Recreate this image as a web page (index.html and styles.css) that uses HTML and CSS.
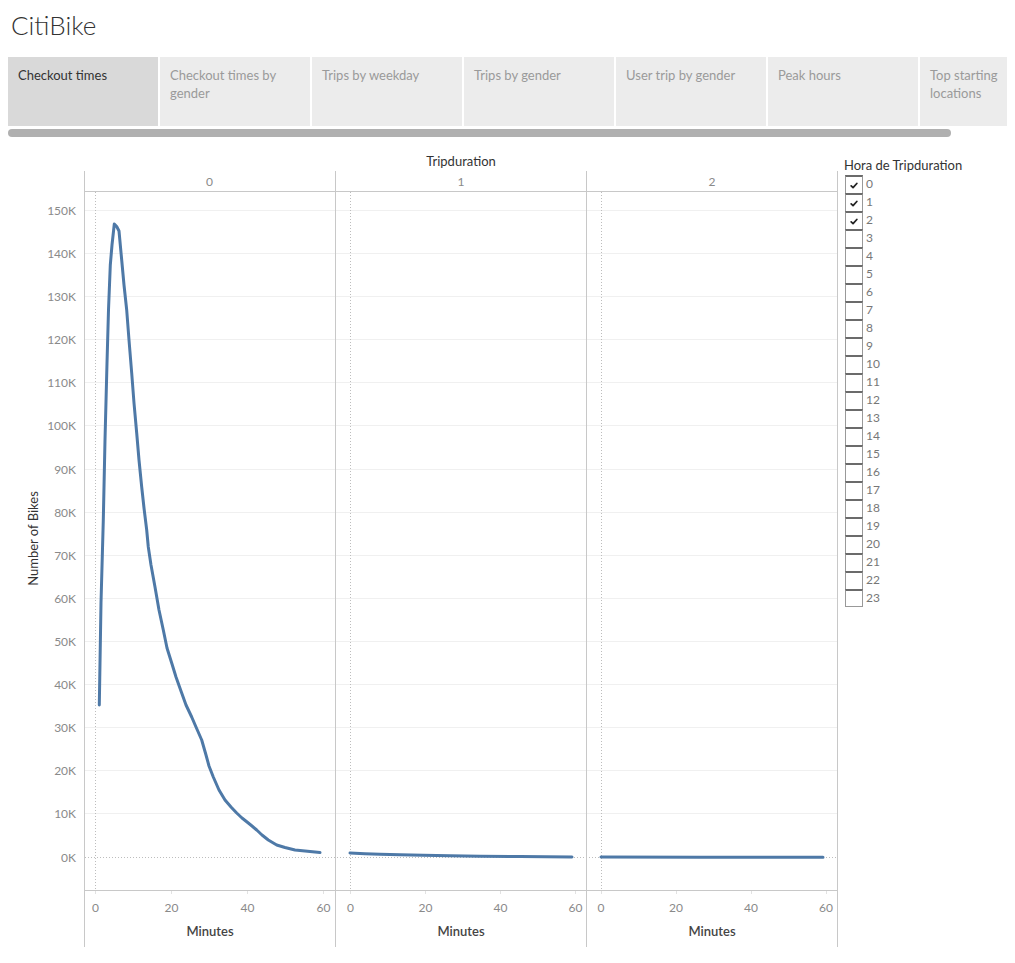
FILE: index.html
```html
<!DOCTYPE html>
<html lang="en">
<head>
<meta charset="utf-8">
<title>CitiBike</title>
<link rel="stylesheet" href="styles.css">
</head>
<body>
<h1 class="title">CitiBike</h1>
<nav class="tabs">
  <div class="tab active">Checkout times</div>
  <div class="tab">Checkout times by gender</div>
  <div class="tab">Trips by weekday</div>
  <div class="tab">Trips by gender</div>
  <div class="tab">User trip by gender</div>
  <div class="tab">Peak hours</div>
  <div class="tab last">Top starting locations</div>
</nav>
<div class="scrollbar"></div>
<main class="viz">
  <svg class="chart" width="838" height="800" viewBox="0 150 838 800" xmlns="http://www.w3.org/2000/svg">
    <!-- gridlines -->
    <g class="grid">
      <line x1="85" x2="837" y1="210.5" y2="210.5"/>
      <line x1="85" x2="837" y1="253.5" y2="253.5"/>
      <line x1="85" x2="837" y1="296.5" y2="296.5"/>
      <line x1="85" x2="837" y1="339.5" y2="339.5"/>
      <line x1="85" x2="837" y1="382.5" y2="382.5"/>
      <line x1="85" x2="837" y1="425.5" y2="425.5"/>
      <line x1="85" x2="837" y1="469.5" y2="469.5"/>
      <line x1="85" x2="837" y1="512.5" y2="512.5"/>
      <line x1="85" x2="837" y1="555.5" y2="555.5"/>
      <line x1="85" x2="837" y1="598.5" y2="598.5"/>
      <line x1="85" x2="837" y1="641.5" y2="641.5"/>
      <line x1="85" x2="837" y1="684.5" y2="684.5"/>
      <line x1="85" x2="837" y1="727.5" y2="727.5"/>
      <line x1="85" x2="837" y1="770.5" y2="770.5"/>
      <line x1="85" x2="837" y1="813.5" y2="813.5"/>
    </g>
    <!-- zero lines -->
    <g class="zero">
      <line x1="85" x2="837" y1="857.5" y2="857.5"/>
      <line x1="95.5" x2="95.5" y1="192" y2="890"/>
      <line x1="350.5" x2="350.5" y1="192" y2="890"/>
      <line x1="601.5" x2="601.5" y1="192" y2="890"/>
    </g>
    <!-- bottom ticks -->
    <g class="ticks">
      <line x1="95.5" x2="95.5" y1="891" y2="894"/>
      <line x1="171.5" x2="171.5" y1="891" y2="894"/>
      <line x1="247.5" x2="247.5" y1="891" y2="894"/>
      <line x1="323.5" x2="323.5" y1="891" y2="894"/>
      <line x1="350.5" x2="350.5" y1="891" y2="894"/>
      <line x1="425.5" x2="425.5" y1="891" y2="894"/>
      <line x1="500.5" x2="500.5" y1="891" y2="894"/>
      <line x1="575.5" x2="575.5" y1="891" y2="894"/>
      <line x1="601.5" x2="601.5" y1="891" y2="894"/>
      <line x1="676.5" x2="676.5" y1="891" y2="894"/>
      <line x1="751.5" x2="751.5" y1="891" y2="894"/>
      <line x1="826.5" x2="826.5" y1="891" y2="894"/>
    </g>
    <!-- frame -->
    <g class="frame">
      <line x1="84.5" x2="84.5" y1="171" y2="947"/>
      <line x1="335.5" x2="335.5" y1="171" y2="947"/>
      <line x1="586.5" x2="586.5" y1="171" y2="947"/>
      <line x1="837.5" x2="837.5" y1="171" y2="947"/>
      <line x1="84" x2="838" y1="191.5" y2="191.5"/>
      <line x1="84" x2="838" y1="890.5" y2="890.5"/>
    </g>
    <!-- data -->
    <g class="series">
      <polyline points="99.3,705 101,603 103.3,520 105,440 107,363 108.5,310 110.3,265 112,245 114.3,224 116.7,226.5 119,231 121.7,260 124,285 126.7,310 129,340 131.7,373 134,403 136.7,433 139,460 141.7,487 144,508 146.7,530 148.3,547 151,565 155,587 159,610 163.3,630 167,648 171.7,663 176,677 181.7,693 186,705 191.7,717 196,727 201.7,740 206,755 209,766 213.3,777 219,790 225,800 231,807 236.7,813 242,818 248.3,823 252,826 256.7,830 262,835 268.3,840 276.7,845 285,847.5 295,850 305,851 320,852.5"/>
      <polyline points="350,853 365,853.7 380,854.3 400,854.8 423,855.3 450,855.8 480,856.2 520,856.6 572,857"/>
      <polyline points="601,857 700,857.2 823,857.2"/>
    </g>
    <!-- texts -->
    <text class="axis-title" x="461" y="165.5" text-anchor="middle">Tripduration</text>
    <g class="tick-label" text-anchor="middle">
      <text x="209.5" y="186">0</text>
      <text x="461" y="186">1</text>
      <text x="712" y="186">2</text>
    </g>
    <g class="tick-label" text-anchor="end">
      <text x="76" y="215">150K</text>
      <text x="76" y="258">140K</text>
      <text x="76" y="301">130K</text>
      <text x="76" y="344">120K</text>
      <text x="76" y="387">110K</text>
      <text x="76" y="430">100K</text>
      <text x="76" y="474">90K</text>
      <text x="76" y="517">80K</text>
      <text x="76" y="560">70K</text>
      <text x="76" y="603">60K</text>
      <text x="76" y="646">50K</text>
      <text x="76" y="689">40K</text>
      <text x="76" y="732">30K</text>
      <text x="76" y="775">20K</text>
      <text x="76" y="818">10K</text>
      <text x="76" y="861.5">0K</text>
    </g>
    <text class="axis-title" transform="translate(37.5 538.5) rotate(-90)" text-anchor="middle">Number of Bikes</text>
    <g class="tick-label" text-anchor="middle">
      <text x="95.5" y="911.5">0</text>
      <text x="171.5" y="911.5">20</text>
      <text x="247.5" y="911.5">40</text>
      <text x="323.5" y="911.5">60</text>
      <text x="350.5" y="911.5">0</text>
      <text x="425.5" y="911.5">20</text>
      <text x="500.5" y="911.5">40</text>
      <text x="575.5" y="911.5">60</text>
      <text x="601" y="911.5">0</text>
      <text x="676" y="911.5">20</text>
      <text x="751" y="911.5">40</text>
      <text x="826" y="911.5">60</text>
    </g>
    <g class="axis-title strong" text-anchor="middle">
      <text x="210" y="935.5">Minutes</text>
      <text x="461" y="935.5">Minutes</text>
      <text x="712" y="935.5">Minutes</text>
    </g>
  </svg>
  <aside class="legend">
    <div class="legend-title">Hora de Tripduration</div>
    <ul class="legend-list">
      <li class="item"><span class="box checked"><svg viewBox="0 0 10 8" width="8" height="7"><path d="M1.5 4.5 L3.8 6.6 L8.5 1.5"/></svg></span><span class="lbl">0</span></li>
      <li class="item"><span class="box checked"><svg viewBox="0 0 10 8" width="8" height="7"><path d="M1.5 4.5 L3.8 6.6 L8.5 1.5"/></svg></span><span class="lbl">1</span></li>
      <li class="item"><span class="box checked"><svg viewBox="0 0 10 8" width="8" height="7"><path d="M1.5 4.5 L3.8 6.6 L8.5 1.5"/></svg></span><span class="lbl">2</span></li>
      <li class="item"><span class="box"></span><span class="lbl">3</span></li>
      <li class="item"><span class="box"></span><span class="lbl">4</span></li>
      <li class="item"><span class="box"></span><span class="lbl">5</span></li>
      <li class="item"><span class="box"></span><span class="lbl">6</span></li>
      <li class="item"><span class="box"></span><span class="lbl">7</span></li>
      <li class="item"><span class="box"></span><span class="lbl">8</span></li>
      <li class="item"><span class="box"></span><span class="lbl">9</span></li>
      <li class="item"><span class="box"></span><span class="lbl">10</span></li>
      <li class="item"><span class="box"></span><span class="lbl">11</span></li>
      <li class="item"><span class="box"></span><span class="lbl">12</span></li>
      <li class="item"><span class="box"></span><span class="lbl">13</span></li>
      <li class="item"><span class="box"></span><span class="lbl">14</span></li>
      <li class="item"><span class="box"></span><span class="lbl">15</span></li>
      <li class="item"><span class="box"></span><span class="lbl">16</span></li>
      <li class="item"><span class="box"></span><span class="lbl">17</span></li>
      <li class="item"><span class="box"></span><span class="lbl">18</span></li>
      <li class="item"><span class="box"></span><span class="lbl">19</span></li>
      <li class="item"><span class="box"></span><span class="lbl">20</span></li>
      <li class="item"><span class="box"></span><span class="lbl">21</span></li>
      <li class="item"><span class="box"></span><span class="lbl">22</span></li>
      <li class="item last"><span class="box"></span><span class="lbl">23</span></li>
    </ul>
  </aside>
</main>
</body>
</html>
```
FILE: styles.css
```css
* { box-sizing: border-box; }
html, body {
  margin: 0;
  padding: 0;
  background: #ffffff;
  font-family: Lato, "Liberation Sans", sans-serif;
  color: #333333;
}
.title {
  margin: 10px 0 0 11px;
  font-size: 26px;
  line-height: 31px;
  font-weight: 300;
  color: #333333;
}
.tabs {
  display: flex;
  gap: 2px;
  margin: 16px 0 0 8px;
  width: 999px;
  height: 69px;
  overflow: hidden;
}
.tab {
  flex: 0 0 150px;
  background: #ececec;
  color: #9a9a9a;
  font-size: 13px;
  line-height: 18px;
  padding: 9px 10px 0 10px;
}
.tab.active {
  background: #d9d9d9;
  color: #333333;
}
.tab.last {
  flex: 1 1 auto;
  min-width: 0;
  padding-right: 0;
}
.scrollbar {
  margin: 3px 0 0 8px;
  width: 943px;
  height: 8px;
  border-radius: 4px;
  background: #b0b0b0;
}
.viz {
  display: flex;
  margin-top: 13px;
}
.chart {
  display: block;
  flex: 0 0 838px;
}
.chart .grid line {
  stroke: #f0f0f0;
  stroke-width: 1;
}
.chart .zero line {
  stroke: #bdbdbd;
  stroke-width: 1;
  stroke-dasharray: 1 2;
}
.chart .ticks line {
  stroke: #e2e2e2;
  stroke-width: 1;
}
.chart .frame line {
  stroke: #c8c8c8;
  stroke-width: 1;
}
.chart .series polyline {
  fill: none;
  stroke: #4e79a7;
  stroke-width: 3;
  stroke-linejoin: round;
  stroke-linecap: round;
}
.chart text {
  font-family: Lato, "Liberation Sans", sans-serif;
}
.chart .tick-label {
  font-size: 12px;
  fill: #8a8a8a;
}
.chart .axis-title {
  font-size: 13px;
  fill: #333333;
}
.chart .axis-title.strong {
  font-weight: 600;
  fill: #444444;
}
.legend {
  padding: 7px 0 0 6px;
}
.legend-title {
  font-size: 13px;
  line-height: 16px;
  color: #333333;
}
.legend-list {
  list-style: none;
  margin: 2px 0 0 1px;
  padding: 0;
}
.item {
  display: flex;
  align-items: center;
  height: 18px;
}
.box {
  width: 18px;
  height: 18px;
  border-top: 2px solid #6b6b6b;
  border-left: 1px solid #999999;
  border-right: 1px solid #999999;
  display: flex;
  align-items: center;
  justify-content: center;
}
.item.last .box {
  border-bottom: 1px solid #999999;
}
.box svg path {
  fill: none;
  stroke: #222222;
  stroke-width: 2.2;
  stroke-linecap: round;
  stroke-linejoin: round;
}
.lbl {
  margin-left: 3px;
  font-size: 12px;
  line-height: 18px;
  color: #777777;
}
```
